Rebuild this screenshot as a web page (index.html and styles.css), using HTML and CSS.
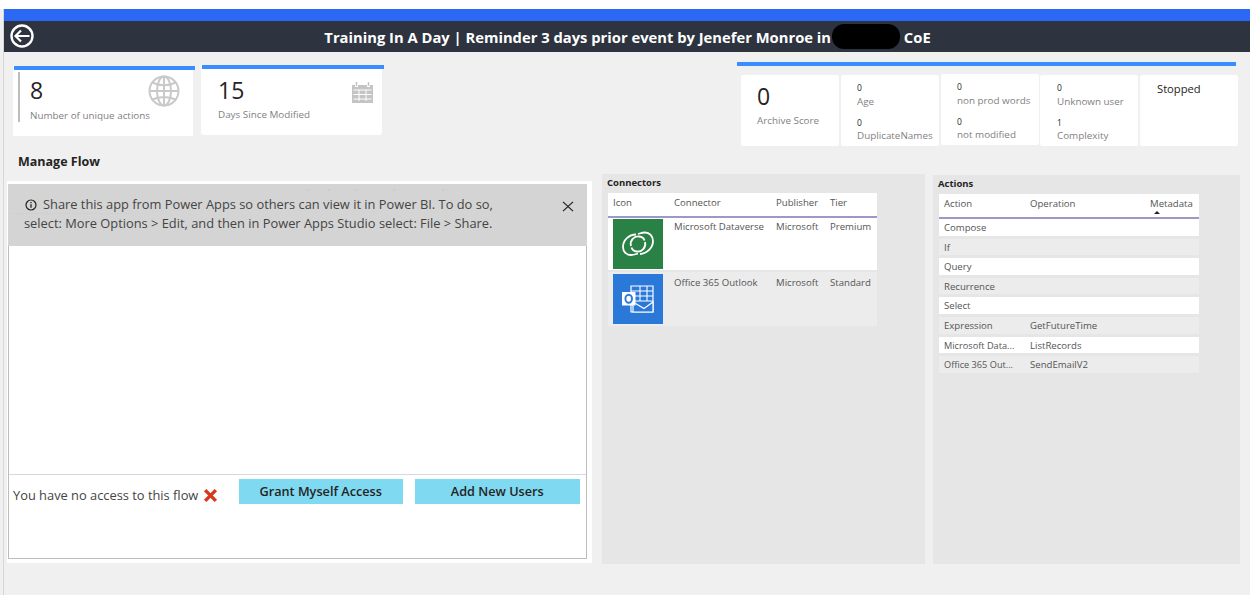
FILE: index.html
```html
<!DOCTYPE html>
<html lang="en">
<head>
<meta charset="utf-8">
<title>Manage Flow</title>
<link rel="stylesheet" href="styles.css">
</head>
<body>
<div class="strip"></div>
<div class="app">
  <div class="blue"></div>
  <header class="header">
    <svg class="back" viewBox="0 0 24 24" width="24" height="24"><circle cx="12" cy="12" r="10.500" fill="none" stroke="#fff" stroke-width="2.400"/><path d="M19.500 12H6M11 6.500 5.500 12l5.500 5.500" fill="none" stroke="#fff" stroke-width="2.200"/></svg>
    <h1 class="title">Training In A Day | Reminder 3 days prior event by Jenefer Monroe in<span class="redact"></span> CoE</h1>
  </header>

  <section class="kpis">
    <div class="kpi-left">
      <div class="card card-a">
        <div class="accent"></div>
        <div class="card-a-body">
          <div class="rule"></div>
          <div class="big-block">
            <div class="big">8</div>
            <div class="label">Number of unique actions</div>
          </div>
          <svg class="globe" viewBox="0 0 32 32" width="32" height="32" fill="none" stroke="#c9c9c9" stroke-width="2"><circle cx="16" cy="16" r="14.500"/><ellipse cx="16" cy="16" rx="7" ry="14.500"/><path d="M16 1.500v29M1.500 16h29M4.500 7.500C11 11 21 11 27.500 7.500M4.500 24.500C11 21 21 21 27.500 24.500"/></svg>
        </div>
      </div>
      <div class="card card-b">
        <div class="accent"></div>
        <div class="card-b-body">
          <div class="big-block">
            <div class="big">15</div>
            <div class="label">Days Since Modified</div>
          </div>
          <svg class="cal" viewBox="0 0 21 22" width="21" height="22"><path fill="#c4c4c4" d="M0 4h3v2h3V4h9v2h3V4h3v18H0z"/><path d="M1.500 9h18M1.500 13.500h18M1.500 18h18M7 9v11M14 9v11" stroke="#fff" stroke-width="1"/><path d="M4.500 1v4M16.500 1v4" stroke="#c4c4c4" stroke-width="1.500"/></svg>
        </div>
      </div>
    </div>
    <div class="kpi-right">
      <div class="accent accent-wide"></div>
      <div class="mini-row">
        <div class="mini mini-score">
          <div class="big">0</div>
          <div class="label">Archive Score</div>
        </div>
        <div class="mini">
          <div class="pair"><div class="num">0</div><div class="label">Age</div></div>
          <div class="pair"><div class="num">0</div><div class="label">DuplicateNames</div></div>
        </div>
        <div class="mini mini-up">
          <div class="pair"><div class="num">0</div><div class="label">non prod words</div></div>
          <div class="pair"><div class="num">0</div><div class="label">not modified</div></div>
        </div>
        <div class="mini mini-close">
          <div class="pair"><div class="num">0</div><div class="label">Unknown user</div></div>
          <div class="pair"><div class="num">1</div><div class="label">Complexity</div></div>
        </div>
        <div class="mini mini-status">Stopped</div>
      </div>
    </div>
  </section>

  <h2 class="manage">Manage Flow</h2>

  <main class="main">
    <section class="flow">
      <div class="frame">
        <div class="notice">
          <i class="ghost-line"></i><i class="ghost-dots"></i>
          <p class="notice-text"><svg class="info" viewBox="0 0 12 12" width="12" height="12"><circle cx="6" cy="6" r="5" fill="none" stroke="#222" stroke-width="1.200"/><path d="M6 5.200v3.600M6 3v1.300" stroke="#222" stroke-width="1.300"/></svg>Share this app from Power Apps so others can view it in Power BI. To do so, select: More Options &gt; Edit, and then in Power Apps Studio select: File &gt; Share.</p>
          <svg class="close" viewBox="0 0 12 12" width="12" height="11" preserveAspectRatio="none"><path d="M1 1l10 10M11 1 1 11" stroke="#222" stroke-width="1.200"/></svg>
        </div>
        <div class="empty"></div>
        <div class="access">
          <span class="access-text">You have no access to this flow</span>
          <svg class="cross" viewBox="0 0 14 14" width="15" height="15"><path d="M2 2l10 10M12 2 2 12" stroke="#d6391c" stroke-width="3.200"/></svg>
          <div class="btn btn-first">Grant Myself Access</div>
          <div class="btn">Add New Users</div>
        </div>
      </div>
    </section>

    <section class="panel panel-conn">
      <h3 class="panel-title">Connectors</h3>
      <div class="table conn-table">
        <div class="conn-row conn-head"><span>Icon</span><span>Connector</span><span>Publisher</span><span>Tier</span></div>
        <div class="conn-row conn-body white">
          <div class="tile green"><svg viewBox="0 0 50 50" width="50" height="50" fill="none" stroke="#fff" stroke-width="1.800"><path d="M23 15.500C16 15.500 10 21 10 28c0 5 3.500 8 8 8 3 0 5-1 7-1.500"/><path d="M27 35C34 34.500 40 29 40 22c0-5-3.500-8.500-8-8.500-3 0-5 1-7 1.500"/><path d="M18 27a7.500 7.500 0 0 1 8-9.500c3 .3 5 2 5.500 4"/><path d="M32 23a7.500 7.500 0 0 1-8 9.500c-3-.3-5-2-5.500-4"/></svg></div>
          <span>Microsoft Dataverse</span><span>Microsoft</span><span>Premium</span>
        </div>
        <div class="conn-row conn-body grey">
          <div class="tile blue-tile"><svg viewBox="0 0 50 50" width="50" height="50"><path d="M18 12h22v26H18z" fill="none" stroke="#fff" stroke-width="1.200"/><path d="M27 12v15M34 12v15M18 17h22M18 22h22M18 27h22" stroke="#fff" stroke-width="1.100"/><path d="M20 28v10h20V28L31 34.500z" fill="#2a78d8" stroke="#fff" stroke-width="1.200"/><path d="M9 18h13.500v13.500H9z" fill="#fff"/><ellipse cx="15.700" cy="24.700" rx="3.300" ry="4" fill="none" stroke="#2a78d8" stroke-width="1.900"/></svg></div>
          <span>Office 365 Outlook</span><span>Microsoft</span><span>Standard</span>
        </div>
      </div>
    </section>

    <section class="panel panel-act">
      <h3 class="panel-title">Actions</h3>
      <div class="table act-table">
        <div class="act-row act-head"><span>Action</span><span>Operation</span><span class="meta">Metadata<i class="sort"></i></span></div>
        <div class="act-row white"><span>Compose</span><span></span></div>
        <div class="act-row grey"><span>If</span><span></span></div>
        <div class="act-row white"><span>Query</span><span></span></div>
        <div class="act-row grey"><span>Recurrence</span><span></span></div>
        <div class="act-row white"><span>Select</span><span></span></div>
        <div class="act-row grey"><span>Expression</span><span>GetFutureTime</span></div>
        <div class="act-row white"><span class="trunc">Microsoft Data...</span><span>ListRecords</span></div>
        <div class="act-row grey"><span class="trunc">Office 365 Out...</span><span>SendEmailV2</span></div>
      </div>
    </section>
  </main>
</div>
</body>
</html>
```
FILE: styles.css
```css
* { box-sizing: border-box; }
html, body { margin: 0; padding: 0; }
body {
  height: 595px;
  overflow: hidden;
  background: #f0f0f0;
  font-family: "Open Sans", "Noto Sans", sans-serif;
  color: #252423;
}
.strip { height: 9px; background: #fff; }
.app { margin-left: 3px; border-left: 1px solid #d6d6d6; height: 586px; }
.blue { height: 12px; background: #2b68f6; }
.header {
  height: 31px;
  background: #2d333f;
  display: flex;
  align-items: center;
  position: relative;
  justify-content: center;
}
.back { position: absolute; left: 6px; top: 3px; }
.title {
  margin: 0 0 0 1px;
  font-size: 14.750px;
  font-weight: 700;
  color: #fff;
  display: flex;
  align-items: center;
  white-space: pre;
}
.redact {
  display: inline-block;
  width: 68px;
  height: 25px;
  margin-left: 1px;
  background: #000;
  border-radius: 12px;
}

.kpis { display: flex; justify-content: space-between; padding: 10px 11px 0 9px; height: 101px; }
.kpi-left { display: flex; gap: 7px; }
.card { background: #fff; height: 70px; }
.accent { height: 4px; background: #3a8dff; }
.card .accent { margin: 0 -2px 0 1px; }
.card-a { width: 180px; margin-top: 4px; }
.card-b { width: 181px; margin: 3px 0 0 1px; border-radius: 0 0 3px 3px; }
.card-a-body { display: flex; padding: 2px 0 0 5px; }
.rule { width: 2px; height: 50px; background: #bdbdbd; margin-right: 10px; flex: none; }
.big-block { flex: 1; min-width: 0; }
.big { font-size: 23px; line-height: 28px; margin-top: 4px; color: #252423; }
.label { font-size: 9.850px; line-height: 14px; color: #7f7f7f; white-space: nowrap; }
.card-a .label { margin-top: 4px; }
.globe { margin: 3px 13px 0 0; flex: none; }
.card-b-body { display: flex; padding: 1px 0 0 17px; }
.card-b .big { margin-top: 6px; }
.card-b .label { margin-top: 3px; }
.cal { margin: 11px 9px 0 0; flex: none; }

.kpi-right { width: 502px; }
.accent-wide { width: 499px; }
.mini-row { display: flex; gap: 2px; margin-top: 9px; margin-left: 4px; }
.mini {
  width: 98px;
  height: 71px;
  background: #fff;
  border-radius: 2px;
  padding: 6px 0 0 16px;
}
.mini-score { padding-top: 7px; }
.mini-score .big { margin: 0; }
.mini-score .label { margin-top: 3px; }
.mini-up { margin-top: -1px; }
.mini-close { margin-left: -1px; padding-left: 17px; }
.pair { height: 35px; }
.num { font-size: 8.500px; line-height: 14px; }
.pair .label { line-height: 14px; margin-top: -1px; }
.pair + .pair .label { margin-top: -2px; }
.mini-status { padding: 5px 0 0 17px; font-size: 11.200px; line-height: 18px; }

.manage { margin: 0; padding: 1px 0 0 14px; font-size: 12.500px; line-height: 16px; height: 21px; font-weight: 700; }

.main { display: flex; align-items: flex-start; padding-left: 3px; }
.flow { width: 585px; height: 382px; background: #fff; margin-top: 7px; padding: 3px 5px 4px 1px; }
.frame { height: 375px; border: 1px solid #bdbdbd; border-top: 0; display: flex; flex-direction: column; }
.notice {
  height: 62px;
  background: #d4d4d4;
  display: flex;
  justify-content: space-between;
  padding: 11px 13px 0 16px;
  margin: 0 -1px;
  position: relative;
}
.ghost-line { position: absolute; left: 4px; top: 29px; width: 120px; height: 1px; background: #cdd0d4; }
.ghost-dots {
  position: absolute;
  left: 299px;
  top: 5px;
  width: 2px;
  height: 2px;
  border-radius: 50%;
  background: #cbcbcb;
  box-shadow: 21px 0 #cbcbcb, 48px 0 #cbcbcb, 86px 0 #cbcbcb, 135px 0 #cbcbcb;
}
.notice-text { margin: 0; width: 490px; font-size: 12.850px; line-height: 19px; color: #444; position: relative; }
.info { vertical-align: -2px; margin: 0 6px 0 1px; }
.close { margin: 6px 0 0 0; flex: none; }
.empty { height: 229px; border-bottom: 1px solid #d8d8d8; }
.access { display: flex; align-items: flex-start; padding: 4px 6.500px 0 4px; }
.access-text { font-size: 12.850px; line-height: 18px; margin-top: 7px; color: #444; white-space: nowrap; }
.cross { margin: 9px 0 0 5px; flex: none; }
.btn {
  width: 164.500px;
  height: 25px;
  margin-left: 12px;
  background: #7fd9f1;
  font-size: 12.700px;
  font-weight: 600;
  line-height: 25px;
  text-align: center;
  color: #252423;
  flex: none;
}
.btn-first { margin-left: auto; }

.panel { background: #e6e6e6; height: 390px; }
.panel-conn { width: 323px; margin: 0 0 0 10px; padding: 2px 0 0 5px; }
.panel-act { width: 307px; height: 389px; margin: 1px 0 0 8px; padding: 2px 0 0 5px; }
.panel-title { margin: 0; font-size: 9.500px; font-weight: 700; line-height: 14px; height: 17px; }
.table { font-size: 9.600px; color: #555; }
.conn-table { width: 269px; margin-left: 1px; }
.conn-row { display: grid; grid-template-columns: 66px 102px 54px 1fr; }
.conn-head { height: 25px; background: #fff; border-bottom: 2px solid #9c99c6; line-height: 19px; }
.conn-head span:first-child { padding-left: 5px; }
.conn-body { line-height: 16px; white-space: nowrap; }
.conn-body.white { height: 52px; padding-top: 1px; }
.conn-body.grey { height: 54px; margin-top: 2px; padding-top: 2px; line-height: 18px; }
.white { background: #fff; }
.grey { background: #ececec; }
.tile { width: 50px; height: 50px; margin-left: 5px; }
.green { background: #2a8145; }
.blue-tile { background: #2a78d8; }

.act-table { width: 260px; margin-left: 1px; display: flex; flex-direction: column; gap: 3px; }
.act-row { display: grid; grid-template-columns: 86px 120px 1fr; height: 16.600px; line-height: 17px; padding-left: 5px; }
.act-head { height: 25px; margin-bottom: -3px; background: #fff; border-bottom: 2px solid #9c99c6; line-height: 19px; }
.trunc { font-size: 9.200px; }
.meta { position: relative; white-space: nowrap; }
.sort {
  position: absolute;
  left: 4px;
  top: 17px;
  border: 3px solid transparent;
  border-top: 0;
  border-bottom: 3px solid #222;
}
```
